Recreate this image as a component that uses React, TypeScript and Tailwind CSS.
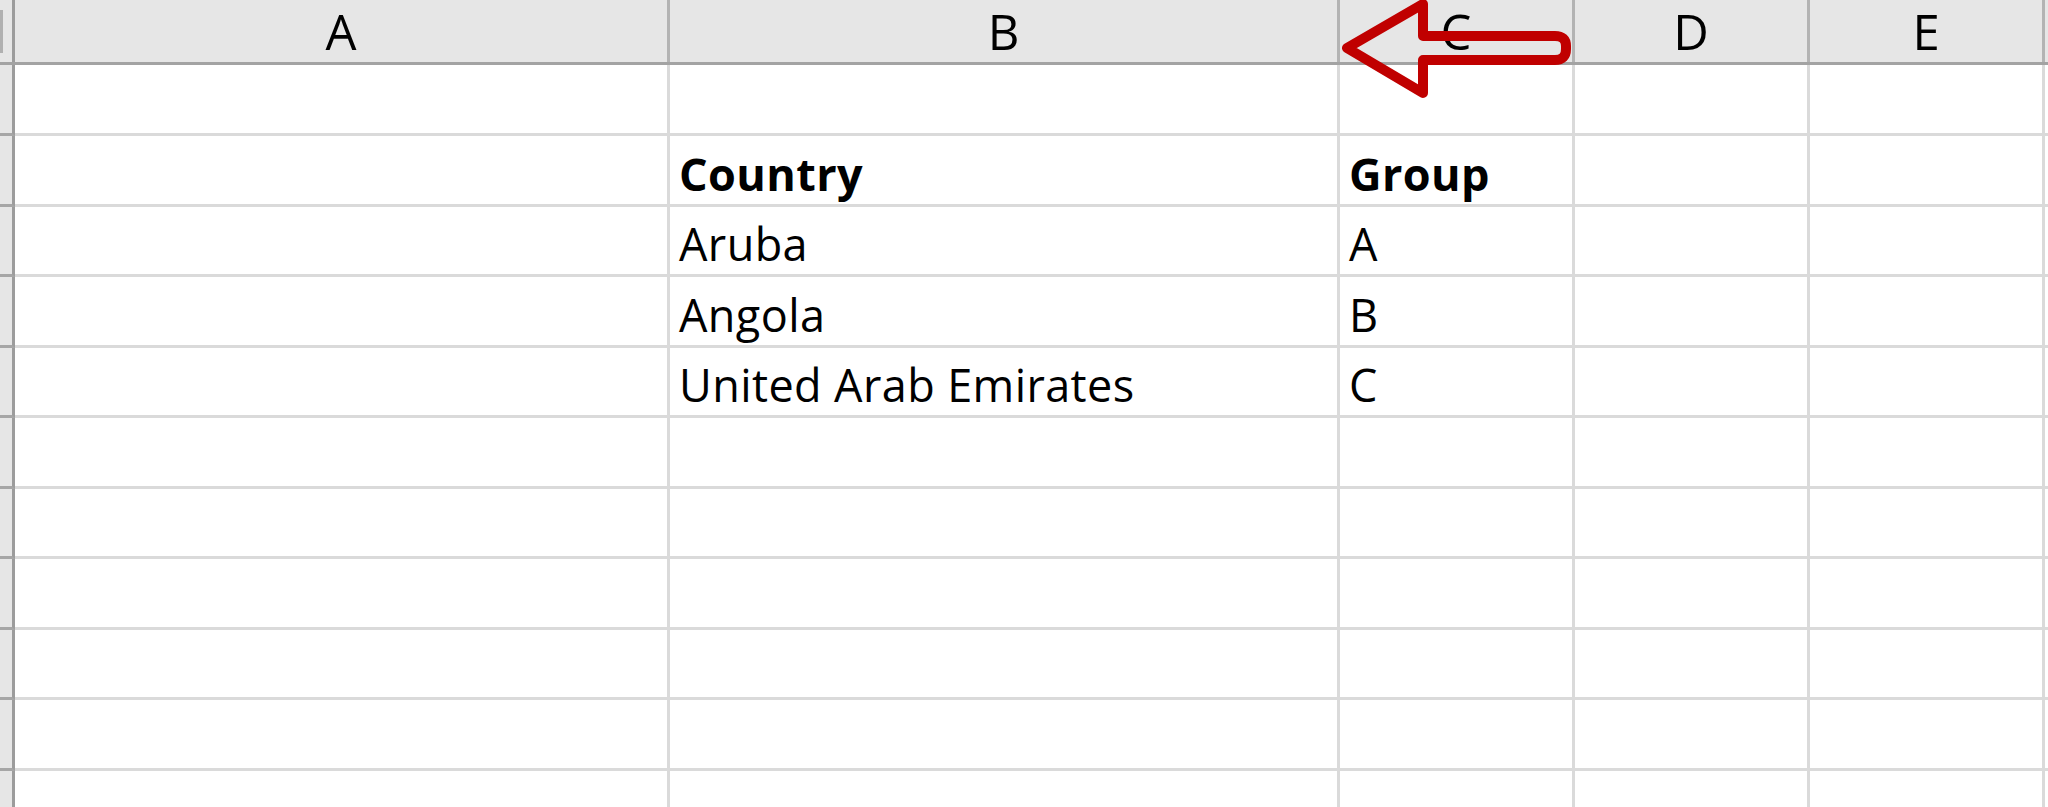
const columns = [
  { label: "A", width: "w-[655px]" },
  { label: "B", width: "w-[670px]" },
  { label: "C", width: "w-[235px]" },
  { label: "D", width: "w-[235px]" },
  { label: "E", width: "w-[235px]" },
];

// row heights alternate so the grid lines land where Excel put them at this zoom
const rowHeights = ["h-[71px]", "h-[71px]", "h-[70px]", "h-[71px]", "h-[70px]", "h-[71px]", "h-[70px]", "h-[71px]", "h-[70px]", "h-[71px]", "h-[71px]"];

const data: Record<number, { b: string; c: string; bold?: boolean }> = {
  1: { b: "Country", c: "Group", bold: true },
  2: { b: "Aruba", c: "A" },
  3: { b: "Angola", c: "B" },
  4: { b: "United Arab Emirates", c: "C" },
};

function Cell({ width, text, bold }: { width: string; text?: string; bold?: boolean }) {
  return (
    <div
      className={`${width} shrink-0 flex items-end pl-[9px] pb-[8px] border-r-[3px] border-b-[3px] border-[#dadada] text-[45px] leading-none tracking-[0.4px] text-black whitespace-nowrap ${
        bold ? "font-bold" : "font-normal"
      }`}
    >
      {text}
    </div>
  );
}

function ArrowOverlay() {
  return (
    <svg className="absolute left-0 top-0 pointer-events-none" width={2048} height={807} viewBox="0 0 2048 807">
      <path
        d="M1347 48 L1423 4 L1423 36 L1555 36 Q1566 36 1566 46 L1566 49 Q1566 60 1555 60 L1423 60 L1423 93 Z"
        fill="none"
        stroke="#c00000"
        strokeWidth={10}
        strokeLinejoin="round"
        strokeLinecap="round"
      />
    </svg>
  );
}

export default function App() {
  return (
    <div className="relative w-[2048px] h-[807px] overflow-hidden bg-white font-['Open_Sans',sans-serif]">
      {/* column headers */}
      <div className="flex h-[65px] bg-[#e6e6e6] border-b-[3px] border-[#a3a3a3]">
        <div className="w-[15px] shrink-0 border-r-[3px] border-[#9c9c9c] pt-[10px]">
          <div className="w-[3px] h-[43px] bg-[#b0b0b0]" />
        </div>
        {columns.map((col) => (
          <div
            key={col.label}
            className={`${col.width} shrink-0 flex items-center justify-center border-r-[3px] border-[#b3b3b3] text-[49px] leading-[62px] text-black`}
          >
            {col.label}
          </div>
        ))}
        <div className="flex-1" />
      </div>

      {/* grid rows */}
      {rowHeights.map((h, i) => {
        const row = data[i];
        return (
          <div key={i} className={`flex ${h}`}>
            <div className="w-[15px] shrink-0 bg-[#e6e6e6] border-r-[3px] border-r-[#9c9c9c] border-b-[3px] border-b-[#a6a6a6]" />
            <Cell width={columns[0].width} />
            <Cell width={columns[1].width} text={row?.b} bold={row?.bold} />
            <Cell width={columns[2].width} text={row?.c} bold={row?.bold} />
            <Cell width={columns[3].width} />
            <Cell width={columns[4].width} />
            <div className="flex-1 border-b-[3px] border-[#dadada]" />
          </div>
        );
      })}

      <ArrowOverlay />
    </div>
  );
}
